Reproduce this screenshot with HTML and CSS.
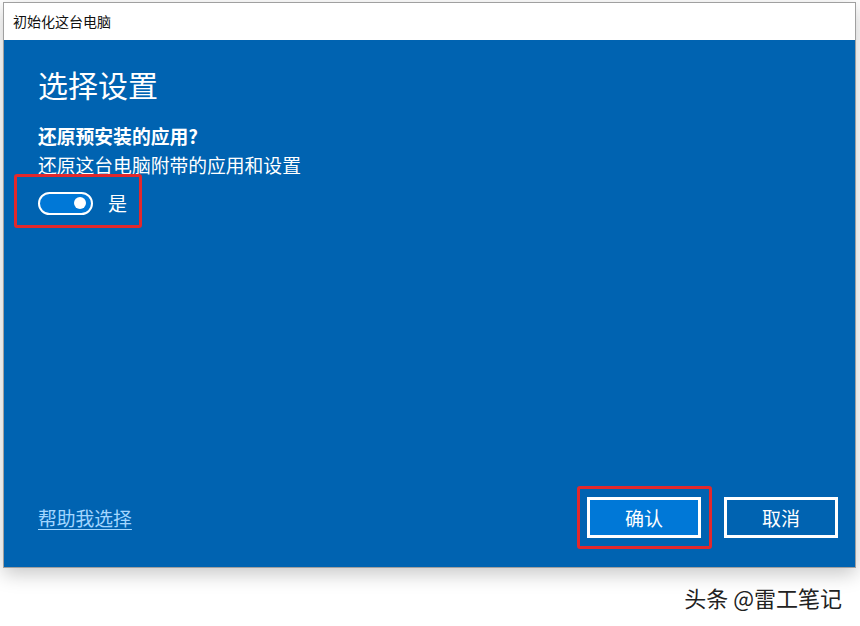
FILE: index.html
```html
<!DOCTYPE html>
<html lang="zh-CN">
<head>
    <meta charset="UTF-8">
    <title>初始化这台电脑</title>
    <link rel="stylesheet" href="styles.css">
</head>
<body>
    <div class="window">
        <div class="titlebar">初始化这台电脑</div>
        <div class="content">
            <h1>选择设置</h1>
            <div class="question">还原预安装的应用?</div>
            <div class="desc">还原这台电脑附带的应用和设置</div>
            <div class="mark toggle-row">
                <span class="toggle"><span class="knob"></span></span>
                <span class="toggle-label">是</span>
            </div>
            <div class="footer">
                <a href="#" class="help">帮助我选择</a>
                <div class="actions">
                    <span class="mark btn-mark">
                        <button class="btn btn-primary">确认</button>
                    </span>
                    <button class="btn">取消</button>
                </div>
            </div>
        </div>
    </div>
    <div class="watermark">头条 @雷工笔记</div>
</body>
</html>
```

FILE: styles.css
```css
body {
    margin: 0;
    background: #ffffff;
    font-family: "Noto Sans CJK SC", "Noto Sans", sans-serif;
}
.window {
    width: 851px;
    margin: 2px 0 0 3px;
    border: 1px solid #a0a0a0;
    box-shadow: 0 6px 18px rgba(0,0,0,0.22);
}
.titlebar {
    height: 37px;
    line-height: 36px;
    padding-left: 9px;
    font-size: 14px;
    color: #111;
    background: #ffffff;
}
.content {
    height: 527px;
    box-sizing: border-box;
    background: #0063b1;
    color: #ffffff;
    padding: 24px 17px 29px 34px;
    display: flex;
    flex-direction: column;
    align-items: flex-start;
}
h1 {
    margin: 0;
    font-size: 30px;
    font-weight: normal;
    line-height: 40px;
}
.question {
    margin-top: 17px;
    font-size: 18.8px;
    font-weight: bold;
    line-height: 29px;
}
.desc {
    font-size: 18.8px;
    line-height: 29px;
}
.mark {
    border: 3px solid #e2282c;
    border-radius: 3px;
}
.toggle-row {
    display: flex;
    align-items: center;
    margin: -5px 0 0 -24px;
    padding: 14px 12px 10px 21px;
}
.toggle {
    width: 55px;
    height: 23px;
    box-sizing: border-box;
    border: 2.5px solid #ffffff;
    border-radius: 12px;
    background: #0078d7;
    display: flex;
    align-items: center;
    justify-content: flex-end;
    padding-right: 5px;
}
.knob {
    width: 12px;
    height: 12px;
    border-radius: 50%;
    background: #ffffff;
}
.toggle-label {
    margin-left: 15px;
    font-size: 19px;
    line-height: 24px;
}
.footer {
    margin-top: auto;
    width: 100%;
    display: flex;
    justify-content: space-between;
    align-items: center;
}
.help {
    color: #a3d6ff;
    font-size: 18.8px;
    text-decoration: underline;
    text-underline-offset: 3px;
}
.actions {
    display: flex;
    align-items: center;
    gap: 12px;
}
.btn-mark {
    display: flex;
    padding: 8px 8px 8px 7px;
    margin: -11px 0;
}
.btn {
    width: 114px;
    height: 41px;
    border: 3px solid #ffffff;
    background: #0063b1;
    color: #ffffff;
    font-family: inherit;
    font-size: 19px;
    padding: 0;
}
.btn-primary {
    background: #0078d7;
}
.watermark {
    text-align: right;
    padding-right: 18px;
    margin-top: 13px;
    font-size: 22px;
    color: #222;
    text-shadow: 0 0 2px #fff, 0 0 2px #fff;
}
```
